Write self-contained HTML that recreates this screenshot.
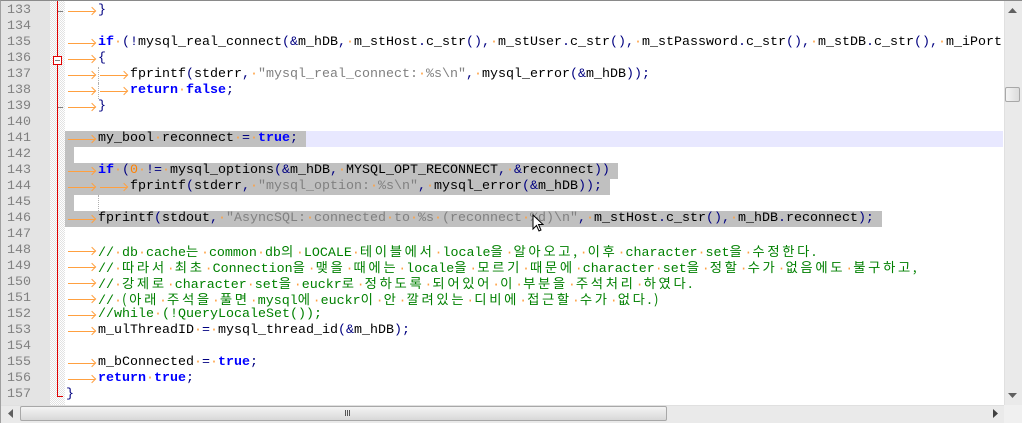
<!DOCTYPE html>
<html><head><meta charset="utf-8"><style>
*{margin:0;padding:0;box-sizing:border-box}
html,body{width:1022px;height:423px;overflow:hidden;background:#fff}
body{position:relative;font-family:"Liberation Mono","Noto Sans CJK KR",monospace;font-size:13.33px;color:#000}
#frame{position:absolute;left:0;top:0;width:1022px;height:423px;border-top:1px solid #8a8a8a;border-left:1px solid #a0a0a0}
#gut{position:absolute;left:1px;top:1px;width:49px;height:404px;background:#e4e4e4}
#fold{position:absolute;left:50px;top:1px;width:15px;height:404px;background-color:#f4f4f4;background-image:repeating-conic-gradient(#e2e2e2 0 25%,#fff 0 50%);background-size:2px 2px}
#c{position:absolute;left:0;top:3px;width:1004px;height:402px;overflow:hidden}
.ln{position:absolute;left:7px;width:40px;height:16px;line-height:16px;color:#808080;font-family:"Liberation Mono",monospace}
.l{position:absolute;left:66px;height:16px;line-height:16px;white-space:pre}
.t{display:inline-block;width:32px;height:16px;vertical-align:top;position:relative}
.t::before{content:'';position:absolute;left:2px;right:3px;top:8px;height:1px;background:#ffa040}
.t::after{content:'';position:absolute;right:3px;top:5px;width:5px;height:5px;border-top:1px solid #ffa040;border-right:1px solid #ffa040;transform:rotate(45deg)}
s{text-decoration:none;color:#ffa040}
.k{color:#0000ff;font-weight:bold}
.o{color:#000080}
.q{color:#808080}
.n{color:#ff8000}
.c{color:#008000}
u{text-decoration:none;font-family:"Noto Sans CJK KR",sans-serif;letter-spacing:2.67px;font-size:13.33px}
.sel{background:#c0c0c0;padding-right:8px;display:inline-block;height:16px;margin-left:-1px;padding-left:1px}
.g{position:absolute;left:98px;width:0;border-left:1px dotted #b0b0b0;height:16px}
</style></head><body>
<div id="frame"></div>
<div id="gut"></div>
<div id="fold"></div>
<div style="position:absolute;left:57px;top:1px;width:1px;height:396px;background:#e00000"></div>
<div id="c">
<div style="position:absolute;left:66px;top:128px;width:937px;height:16px;background:#e8e8ff"></div>
<div style="position:absolute;left:57px;top:393px;width:6px;height:1px;background:#e00000"></div>
<div style="position:absolute;left:58px;top:8px;width:5px;height:1px;background:#808080"></div>
<div style="position:absolute;left:58px;top:104px;width:5px;height:1px;background:#808080"></div>
<div style="position:absolute;left:53px;top:53px;width:9px;height:9px;border:1px solid #e00000;background:#fff"></div>
<div style="position:absolute;left:55px;top:57px;width:5px;height:1px;background:#808080"></div>

<div class="ln" style="top:0px">133</div><div class="ln" style="top:16px">134</div><div class="ln" style="top:32px">135</div><div class="ln" style="top:48px">136</div><div class="ln" style="top:64px">137</div><div class="ln" style="top:80px">138</div><div class="ln" style="top:96px">139</div><div class="ln" style="top:112px">140</div><div class="ln" style="top:128px">141</div><div class="ln" style="top:144px">142</div><div class="ln" style="top:160px">143</div><div class="ln" style="top:176px">144</div><div class="ln" style="top:192px">145</div><div class="ln" style="top:208px">146</div><div class="ln" style="top:224px">147</div><div class="ln" style="top:240px">148</div><div class="ln" style="top:256px">149</div><div class="ln" style="top:272px">150</div><div class="ln" style="top:288px">151</div><div class="ln" style="top:304px">152</div><div class="ln" style="top:320px">153</div><div class="ln" style="top:336px">154</div><div class="ln" style="top:352px">155</div><div class="ln" style="top:368px">156</div><div class="ln" style="top:384px">157</div>

<div class="g" style="top:64px"></div><div class="g" style="top:80px"></div><div class="g" style="top:176px"></div><div class="g" style="top:192px"></div>

<div class="l" style="top:0px"><span class="t"></span><span class="o">}</span></div>
<div class="l" style="top:32px"><span class="t"></span><span class="k">if</span><s>·</s><span class="o">(!</span>mysql_real_connect<span class="o">(&amp;</span>m_hDB<span class="o">,</span><s>·</s>m_stHost<span class="o">.</span>c_str<span class="o">(),</span><s>·</s>m_stUser<span class="o">.</span>c_str<span class="o">(),</span><s>·</s>m_stPassword<span class="o">.</span>c_str<span class="o">(),</span><s>·</s>m_stDB<span class="o">.</span>c_str<span class="o">(),</span><s>·</s>m_iPort</div>
<div class="l" style="top:48px"><span class="t"></span><span class="o">{</span></div>
<div class="l" style="top:64px"><span class="t"></span><span class="t"></span>fprintf<span class="o">(</span>stderr<span class="o">,</span><s>·</s><span class="q">"mysql_real_connect:<s>·</s>%s\n"</span><span class="o">,</span><s>·</s>mysql_error<span class="o">(&amp;</span>m_hDB<span class="o">));</span></div>
<div class="l" style="top:80px"><span class="t"></span><span class="t"></span><span class="k">return</span><s>·</s><span class="k">false</span><span class="o">;</span></div>
<div class="l" style="top:96px"><span class="t"></span><span class="o">}</span></div>
<div class="l" style="top:128px"><span class="sel"><span class="t"></span>my_bool<s>·</s>reconnect<s>·</s><span class="o">=</span><s>·</s><span class="k">true</span><span class="o">;</span></span></div>
<div class="l" style="top:144px"><span class="sel"></span></div>
<div class="l" style="top:160px"><span class="sel"><span class="t"></span><span class="k">if</span><s>·</s><span class="o">(</span><span class="n">0</span><s>·</s><span class="o">!=</span><s>·</s>mysql_options<span class="o">(&amp;</span>m_hDB<span class="o">,</span><s>·</s>MYSQL_OPT_RECONNECT<span class="o">,</span><s>·</s><span class="o">&amp;</span>reconnect<span class="o">))</span></span></div>
<div class="l" style="top:176px"><span class="sel"><span class="t"></span><span class="t"></span>fprintf<span class="o">(</span>stderr<span class="o">,</span><s>·</s><span class="q">"mysql_option:<s>·</s>%s\n"</span><span class="o">,</span><s>·</s>mysql_error<span class="o">(&amp;</span>m_hDB<span class="o">));</span></span></div>
<div class="l" style="top:192px"><span class="sel"></span></div>
<div class="l" style="top:208px"><span class="sel"><span class="t"></span>fprintf<span class="o">(</span>stdout<span class="o">,</span><s>·</s><span class="q">"AsyncSQL:<s>·</s>connected<s>·</s>to<s>·</s>%s<s>·</s>(reconnect<s>·</s>%d)\n"</span><span class="o">,</span><s>·</s>m_stHost<span class="o">.</span>c_str<span class="o">(),</span><s>·</s>m_hDB<span class="o">.</span>reconnect<span class="o">);</span></span></div>
<div class="l c" style="top:240px"><span class="t"></span>//<s>·</s>db<s>·</s>cache<u>는</u><s>·</s>common<s>·</s>db<u>의</u><s>·</s>LOCALE<s>·</s><u>테이블에서</u><s>·</s>locale<u>을</u><s>·</s><u>알아오고,</u><s>·</s><u>이후</u><s>·</s>character<s>·</s>set<u>을</u><s>·</s><u>수정한다.</u></div>
<div class="l c" style="top:256px"><span class="t"></span>//<s>·</s><u>따라서</u><s>·</s><u>최초</u><s>·</s>Connection<u>을</u><s>·</s><u>맺을</u><s>·</s><u>때에는</u><s>·</s>locale<u>을</u><s>·</s><u>모르기</u><s>·</s><u>때문에</u><s>·</s>character<s>·</s>set<u>을</u><s>·</s><u>정할</u><s>·</s><u>수가</u><s>·</s><u>없음에도</u><s>·</s><u>불구하고,</u></div>
<div class="l c" style="top:272px"><span class="t"></span>//<s>·</s><u>강제로</u><s>·</s>character<s>·</s>set<u>을</u><s>·</s>euckr<u>로</u><s>·</s><u>정하도록</u><s>·</s><u>되어있어</u><s>·</s><u>이</u><s>·</s><u>부분을</u><s>·</s><u>주석처리</u><s>·</s><u>하였다.</u></div>
<div class="l c" style="top:288px"><span class="t"></span>//<s>·</s><u>(아래</u><s>·</s><u>주석을</u><s>·</s><u>풀면</u><s>·</s>mysql<u>에</u><s>·</s>euckr<u>이</u><s>·</s><u>안</u><s>·</s><u>깔려있는</u><s>·</s><u>디비에</u><s>·</s><u>접근할</u><s>·</s><u>수가</u><s>·</s><u>없다.)</u></div>
<div class="l c" style="top:304px"><span class="t"></span>//while<s>·</s>(!QueryLocaleSet());</div>
<div class="l" style="top:320px"><span class="t"></span>m_ulThreadID<s>·</s><span class="o">=</span><s>·</s>mysql_thread_id<span class="o">(&amp;</span>m_hDB<span class="o">);</span></div>
<div class="l" style="top:352px"><span class="t"></span>m_bConnected<s>·</s><span class="o">=</span><s>·</s><span class="k">true</span><span class="o">;</span></div>
<div class="l" style="top:368px"><span class="t"></span><span class="k">return</span><s>·</s><span class="k">true</span><span class="o">;</span></div>
<div class="l" style="top:384px"><span class="o">}</span></div>

<svg style="position:absolute;left:532px;top:211px" width="14" height="20" viewBox="0 0 14 20"><path d="M1 1 L1 15 L4.5 11.5 L7 17 L9 16 L6.5 10.5 L11 10.5 Z" fill="#fff" stroke="#000" stroke-width="1"/></svg>
</div>

<!-- vertical scrollbar -->
<div style="position:absolute;left:1004px;top:1px;width:18px;height:404px;background:#eaeaea;border-left:1px solid #e0e0e0"></div>
<svg style="position:absolute;left:1008px;top:8px" width="9" height="5"><path d="M0 5 L4.5 0 L9 5Z" fill="#606060"/></svg>
<svg style="position:absolute;left:1008px;top:393px" width="9" height="5"><path d="M0 0 L4.5 5 L9 0Z" fill="#606060"/></svg>
<div style="position:absolute;left:1005px;top:87px;width:15px;height:15px;border:1px solid #a8a8a8;border-radius:2px;background:linear-gradient(90deg,#f4f4f4,#dcdcdc)"></div>
<!-- horizontal scrollbar -->
<div style="position:absolute;left:1px;top:405px;width:1003px;height:18px;background:#eaeaea;border-top:1px solid #e0e0e0"></div>
<div style="position:absolute;left:1004px;top:405px;width:18px;height:18px;background:#f0f0f0"></div>
<svg style="position:absolute;left:8px;top:409px" width="5" height="9"><path d="M5 0 L0 4.5 L5 9Z" fill="#606060"/></svg>
<svg style="position:absolute;left:993px;top:409px" width="5" height="9"><path d="M0 0 L5 4.5 L0 9Z" fill="#404040"/></svg>
<div style="position:absolute;left:20px;top:406px;width:647px;height:15px;border:1px solid #a8a8a8;border-radius:2px;background:linear-gradient(#f4f4f4,#d8d8d8)"></div>
<div style="position:absolute;left:345px;top:410px;width:1px;height:6px;background:#555;box-shadow:2px 0 #555,4px 0 #555"></div>
</body></html>
